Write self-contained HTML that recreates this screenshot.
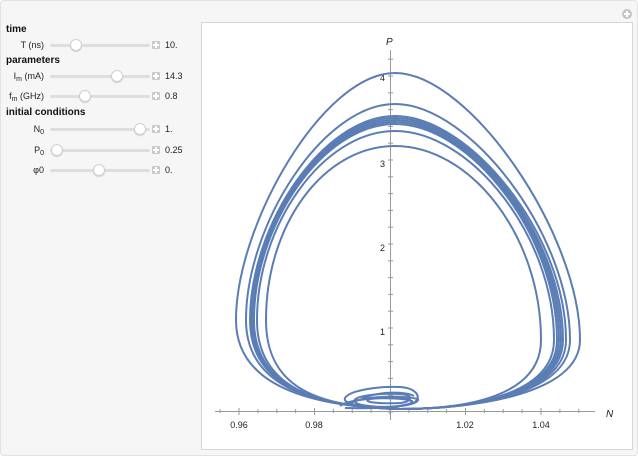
<!DOCTYPE html>
<html><head><meta charset="utf-8"><style>
body{margin:0;width:638px;height:456px;background:#fff;font-family:"Liberation Sans",sans-serif;overflow:hidden}
.frame{position:absolute;left:0;top:0;width:636px;height:454px;background:#f6f6f6;border:1px solid #e2e2e2;border-radius:4px}
.plot{position:absolute;left:201px;top:22px;width:430px;height:426px;background:#fff;border:1px solid #d6d6d6}
.h{position:absolute;left:6px;font-size:10px;font-weight:bold;color:#111}
.row{position:absolute;left:0;height:14px;font-size:9px;color:#222}
.lab{position:absolute;top:2px;white-space:nowrap;text-align:right}
.track{position:absolute;left:50px;top:6px;width:100px;height:3px;background:#dedede;border-radius:2px}
.th{position:absolute;top:1px;width:12px;height:12px;border-radius:50%;background:#fff;border:1px solid #cfcfcf;box-sizing:border-box;box-shadow:0 1px 1px rgba(0,0,0,.15)}
.pl{position:absolute;left:152px;top:3px;width:8px;height:8px;background:#c9c9c9;border-radius:1px}
.pl:before{content:"";position:absolute;left:3px;top:1px;width:2px;height:6px;background:#fff}
.pl:after{content:"";position:absolute;left:1px;top:3px;width:6px;height:2px;background:#fff}
.val{position:absolute;left:165px;top:2px}
sub{font-size:7px;vertical-align:-2px}
</style></head><body>
<div class="frame"></div>
<div style="position:absolute;left:622px;top:9px;width:10px;height:10px;border-radius:50%;background:#c4c4c4"><div style="position:absolute;left:4px;top:2px;width:2px;height:6px;background:#fff"></div><div style="position:absolute;left:2px;top:4px;width:6px;height:2px;background:#fff"></div></div>
<div class="h" style="top:24px">time</div>
<div class="row" style="top:38px"><span class="lab" style="left:0;width:44px">T (ns)</span><div class="track"></div><div class="th" style="left:70px"></div><div class="pl"></div><span class="val">10.</span></div>
<div class="h" style="top:55px">parameters</div>
<div class="row" style="top:69px"><span class="lab" style="left:0;width:44px">I<sub>m</sub> (mA)</span><div class="track"></div><div class="th" style="left:111px"></div><div class="pl"></div><span class="val">14.3</span></div>
<div class="row" style="top:89px"><span class="lab" style="left:0;width:44px">f<sub>m</sub> (GHz)</span><div class="track"></div><div class="th" style="left:79px"></div><div class="pl"></div><span class="val">0.8</span></div>
<div class="h" style="top:107px">initial conditions</div>
<div class="row" style="top:122px"><span class="lab" style="left:0;width:44px">N<sub>0</sub></span><div class="track"></div><div class="th" style="left:134px"></div><div class="pl"></div><span class="val">1.</span></div>
<div class="row" style="top:143px"><span class="lab" style="left:0;width:44px">P<sub>0</sub></span><div class="track"></div><div class="th" style="left:51px"></div><div class="pl"></div><span class="val">0.25</span></div>
<div class="row" style="top:163px"><span class="lab" style="left:0;width:44px">φ0</span><div class="track"></div><div class="th" style="left:93px"></div><div class="pl"></div><span class="val">0.</span></div>
<div class="plot"></div>
<svg width="638" height="456" style="position:absolute;left:0;top:0" font-family="Liberation Sans, sans-serif" font-size="9">
<g stroke="#999" stroke-width="1">
<line x1="390.5" y1="50" x2="390.5" y2="420"/>
<line x1="215" y1="411.5" x2="595" y2="411.5"/>
<g id="xt"></g>
</g>
<g fill="#222">
<text x="239" y="428" text-anchor="middle">0.96</text>
<text x="314" y="428" text-anchor="middle">0.98</text>
<text x="465" y="428" text-anchor="middle">1.02</text>
<text x="541" y="428" text-anchor="middle">1.04</text>
<text x="385" y="81" text-anchor="end">4</text>
<text x="385" y="167" text-anchor="end">3</text>
<text x="385" y="251" text-anchor="end">2</text>
<text x="385" y="335" text-anchor="end">1</text>
<text x="386" y="45" font-style="italic" font-size="10">P</text>
<text x="606" y="417" font-style="italic" font-size="10">N</text>
</g>
<g id="curves" fill="none" stroke="#5b7db5" stroke-width="2"></g>
</svg>
<script>
var g=document.getElementById('curves'),t=document.getElementById('xt'),s='';
function loop(T,L,R){var cx=395;return 'M400 409 C320 407 '+L+' 390 '+L+' 320 C'+L+' 225 '+(cx-72)+' '+T+' '+cx+' '+T+' C'+(cx+75)+' '+T+' '+R+' 235 '+R+' 340 C'+R+' 395 470 409 400 409';}
[[73,236,580],[104,246,570],[116,250,566],[118,251,563],[120,252,561],[122,253,559],[124,254,557],[131,257,554],[146,266,541]].forEach(function(a){s+='<path d="'+loop(a[0],a[1],a[2])+'"/>';});
s+='<path d="M395 408 C370 408 342 405 345 398 C350 390 380 386 400 387 C415 388 422 396 415 402 C405 409 360 408 355 402 C350 396 380 393 400 394 C415 395 412 402 400 403 C380 404 360 402 370 399 C385 396 405 397 410 400"/>';
s+='<path d="M350 404 C360 396 400 395 418 399 C420 405 390 409 360 407"/>';
s+='<path d="M340 406 C350 398 395 396 412 401 C414 406 380 409 345 408"/>';
s+='<path d="M360 400 C375 391 405 391 414 396"/>';
g.innerHTML=s;
var k='';for(var i=-1;i<20;i++){var x=239+75.5/4*i;if(x<216||x>594)continue;k+='<line x1="'+x+'" y1="'+(i%4==0?408:409)+'" x2="'+x+'" y2="'+(i%4==0?415:413)+'"/>';}
for(var y=412;y>52;y-=84/5){k+='<line x1="388" y1="'+y+'" x2="393" y2="'+y+'"/>';}
t.innerHTML=k;
</script>
</body></html>
